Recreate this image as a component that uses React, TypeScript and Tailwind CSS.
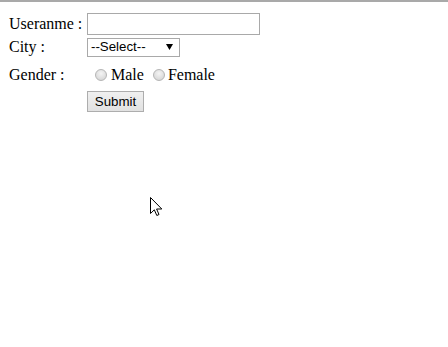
export default function App() {
  return (
    <div className="relative min-h-[347px] w-[448px] border-t-2 border-[#a9a9a9] bg-white font-['Liberation_Serif',serif] text-[16px] leading-[18px] text-black">
      <div className="px-[9px] pt-[10px]">
        {/* Username */}
        <div className="flex items-center h-[24px]">
          <span className="w-[78px]">Useranme :</span>
          <div className="h-[22px] w-[173px] border border-[#a9a9a9] bg-white" />
        </div>

        {/* City */}
        <div className="mt-[1px] flex items-center h-[20px]">
          <span className="w-[78px]">City :</span>
          <div className="flex h-[19px] w-[93px] items-center justify-between border border-[#a9a9a9] bg-white pl-[3px] pr-[6px] font-['Liberation_Sans',sans-serif] text-[13.3px]">
            <span>--Select--</span>
            <svg width="7" height="6" viewBox="0 0 7 6">
              <path d="M0 0H7L3.5 6Z" fill="#000" />
            </svg>
          </div>
        </div>

        {/* Gender */}
        <div className="mt-[8px] flex items-center h-[20px]">
          <span className="w-[86px]">Gender :</span>
          <span className="h-[12px] w-[12px] rounded-full border border-[#b5b5b5] bg-[radial-gradient(circle_at_50%_35%,#f4f4f4,#d0d0d0)]" />
          <span className="ml-[4px]">Male</span>
          <span className="ml-[9px] h-[12px] w-[12px] rounded-full border border-[#b5b5b5] bg-[radial-gradient(circle_at_50%_35%,#f4f4f4,#d0d0d0)]" />
          <span className="ml-[3px]">Female</span>
        </div>

        {/* Submit */}
        <div className="mt-[6px] flex">
          <span className="w-[78px]" />
          <div className="flex h-[21px] w-[57px] items-center justify-center border border-[#adadad] bg-gradient-to-b from-[#f0f0f0] to-[#e1e1e1] font-['Liberation_Sans',sans-serif] text-[13.3px]">
            Submit
          </div>
        </div>
      </div>

      {/* mouse pointer */}
      <svg className="absolute left-[150px] top-[195px]" width="13" height="20" viewBox="0 0 13 20">
        <path d="M0.5 0.5V16.5L4.3 12.8L6.8 18.5L9 17.5L6.6 12H11.8Z" fill="#fff" stroke="#000" strokeWidth="1" strokeLinejoin="miter" />
      </svg>
    </div>
  );
}
